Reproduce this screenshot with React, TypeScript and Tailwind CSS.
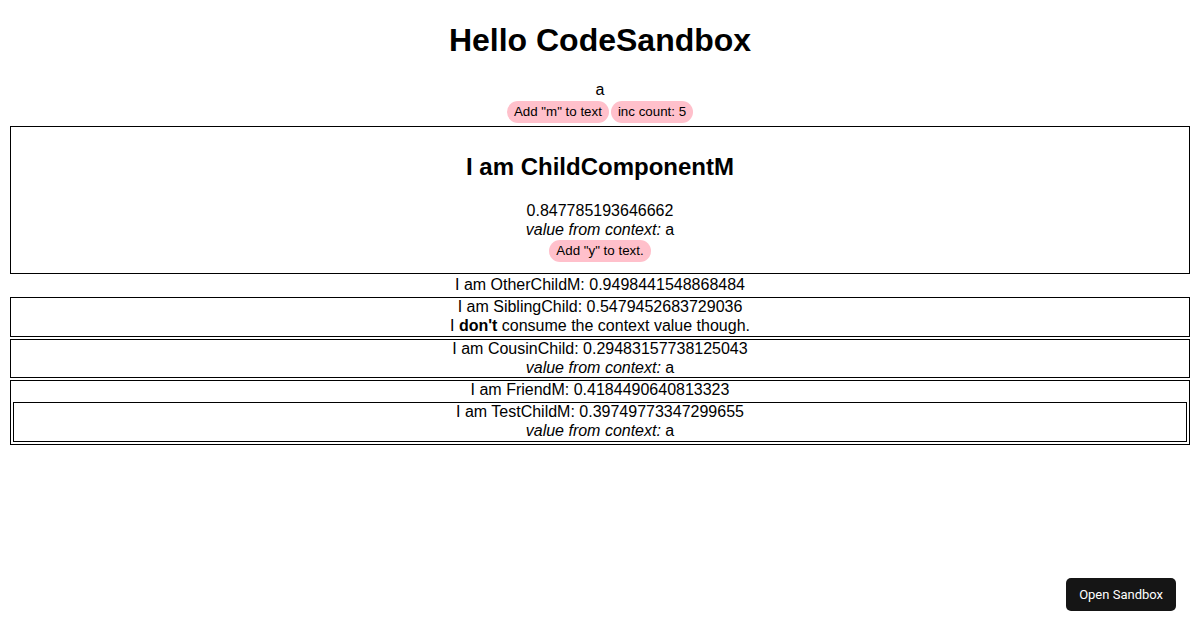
import React from "react";

function PinkButton({ children }: { children: React.ReactNode }) {
  return (
    <button className="h-[22px] px-[7px] rounded-full bg-[pink] text-[13.33px] leading-[16px] text-black">
      {children}
    </button>
  );
}

function Box({ children, className = "" }: { children: React.ReactNode; className?: string }) {
  return <div className={`m-[2px] border border-black ${className}`}>{children}</div>;
}

function Ctx() {
  return (
    <div>
      <i>value from context:</i> a
    </div>
  );
}

export default function App() {
  return (
    <div className="min-h-[630px] px-[8px] text-center text-black text-[16px] leading-[1.18] font-['Liberation_Sans',Arial,sans-serif]">
      <h1 className="text-[32px] leading-[1.15] font-bold pt-[22px] mb-[22px]">Hello CodeSandbox</h1>
      <div>a</div>
      <div className="flex justify-center gap-[2px] pt-[1px] pb-[1px]">
        <PinkButton>Add "m" to text</PinkButton>
        <PinkButton>inc count: 5</PinkButton>
      </div>

      <div>
        <Box className="pb-[11px]">
          <h2 className="text-[24px] leading-[1.15] font-bold mt-[26px]">I am ChildComponentM</h2>
          <div className="mt-[22px]">0.847785193646662</div>
          <Ctx />
          <div className="flex justify-center">
            <PinkButton>Add "y" to text.</PinkButton>
          </div>
        </Box>
        <div>I am OtherChildM: 0.9498441548868484</div>
        <Box>
          <div>I am SiblingChild: 0.5479452683729036</div>
          <div>
            I <b>don't</b> consume the context value though.
          </div>
        </Box>
        <Box>
          <div>I am CousinChild: 0.29483157738125043</div>
          <Ctx />
        </Box>
        <Box>
          <div>I am FriendM: 0.4184490640813323</div>
          <Box>
            <div>I am TestChildM: 0.39749773347299655</div>
            <Ctx />
          </Box>
        </Box>
      </div>

      <button className="fixed right-[24px] bottom-[19px] h-[33px] px-[13px] rounded-[5px] bg-[#151515] text-white text-[13px] font-['Roboto',sans-serif]">
        Open Sandbox
      </button>
    </div>
  );
}
